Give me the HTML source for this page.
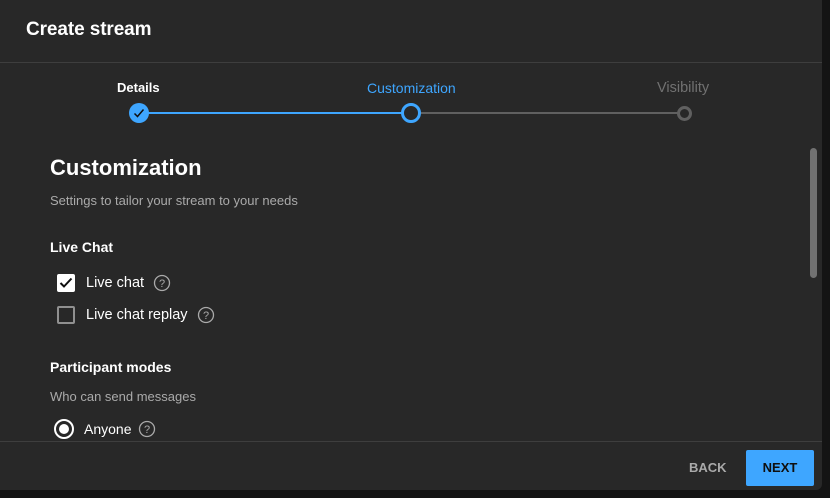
<!DOCTYPE html>
<html><head><style>
*{margin:0;padding:0;box-sizing:border-box}
body{width:830px;height:498px;background:#141414;font-family:"Liberation Sans",sans-serif;position:relative;overflow:hidden}
.dlg{position:absolute;left:0;top:0;width:822px;height:490px;background:#282828;border-radius:0 0 6px 0}
.t{position:absolute;color:#fff;white-space:nowrap}
.line{position:absolute;height:1px;background:#3e3e3e;left:0;width:822px}
</style></head><body>
<div class="dlg">
<div class="t" style="left:26px;top:19px;font-size:19px;font-weight:bold;letter-spacing:-0.1px">Create stream</div>
<div class="line" style="top:62px"></div>
<div class="t" style="left:117px;top:80px;font-size:13px;font-weight:bold">Details</div>
<div class="t" style="left:367px;top:80px;font-size:14px;color:#3ea6ff">Customization</div>
<div class="t" style="left:657px;top:80px;font-size:14.5px;color:#717171">Visibility</div>
<div style="position:absolute;left:139px;top:112px;width:272px;height:2px;background:#3ea6ff"></div>
<div style="position:absolute;left:411px;top:112px;width:273px;height:2px;background:#606060"></div>
<div style="position:absolute;left:129px;top:103px;width:20px;height:20px;border-radius:50%;background:#3ea6ff"></div>
<svg style="position:absolute;left:129px;top:103px" width="20" height="20"><path d="M5.5 10.5l3 3 6-7" stroke="#0f0f0f" stroke-width="1.5" fill="none"/></svg>
<div style="position:absolute;left:401px;top:103px;width:20px;height:20px;border-radius:50%;border:3px solid #3ea6ff;background:#282828"></div>
<div style="position:absolute;left:677px;top:106px;width:15px;height:15px;border-radius:50%;border:3px solid #606060;background:#282828"></div>
<div class="t" style="left:50px;top:155px;font-size:22px;font-weight:bold">Customization</div>
<div class="t" style="left:50px;top:193px;font-size:13px;color:#aaa">Settings to tailor your stream to your needs</div>
<div class="t" style="left:50px;top:239px;font-size:14px;font-weight:bold">Live Chat</div>
<div style="position:absolute;left:57px;top:274px;width:18px;height:18px;background:#fff;border-radius:2px"></div>
<svg style="position:absolute;left:57px;top:274px" width="18" height="18"><path d="M3.5 9l3.5 3.5 7.5-8" stroke="#0f0f0f" stroke-width="2" fill="none"/></svg>
<div class="t" style="left:86px;top:275px;font-size:14.5px">Live chat</div>
<svg style="position:absolute;left:153px;top:274px" width="18" height="18"><circle cx="9" cy="9" r="7.5" stroke="#aaa" stroke-width="1.3" fill="none"/><text x="9" y="13" font-size="11" fill="#aaa" text-anchor="middle" font-family="Liberation Sans">?</text></svg>
<div style="position:absolute;left:57px;top:306px;width:18px;height:18px;border:2px solid #909090;border-radius:2px"></div>
<div class="t" style="left:86px;top:307px;font-size:14.5px">Live chat replay</div>
<svg style="position:absolute;left:197px;top:306px" width="18" height="18"><circle cx="9" cy="9" r="7.5" stroke="#aaa" stroke-width="1.3" fill="none"/><text x="9" y="13" font-size="11" fill="#aaa" text-anchor="middle" font-family="Liberation Sans">?</text></svg>
<div class="t" style="left:50px;top:359px;font-size:14px;font-weight:bold">Participant modes</div>
<div class="t" style="left:50px;top:389px;font-size:13px;color:#aaa">Who can send messages</div>
<div style="position:absolute;left:54px;top:419px;width:20px;height:20px;border-radius:50%;border:2px solid #fff"></div>
<div style="position:absolute;left:59px;top:424px;width:10px;height:10px;border-radius:50%;background:#fff"></div>
<div class="t" style="left:84px;top:421px;font-size:14px">Anyone</div>
<svg style="position:absolute;left:138px;top:420px" width="18" height="18"><circle cx="9" cy="9" r="7.5" stroke="#aaa" stroke-width="1.3" fill="none"/><text x="9" y="13" font-size="11" fill="#aaa" text-anchor="middle" font-family="Liberation Sans">?</text></svg>
<div style="position:absolute;left:810px;top:148px;width:7px;height:130px;background:#717171;border-radius:4px"></div>
<div class="line" style="top:441px"></div>
<div class="t" style="left:689px;top:460px;font-size:13px;font-weight:bold;color:#aaa">BACK</div>
<div style="position:absolute;left:746px;top:450px;width:68px;height:36px;background:#3ea6ff;border-radius:2px;color:#0f0f0f;font-size:13px;font-weight:bold;text-align:center;line-height:36px">NEXT</div>
</div>
</body></html>
